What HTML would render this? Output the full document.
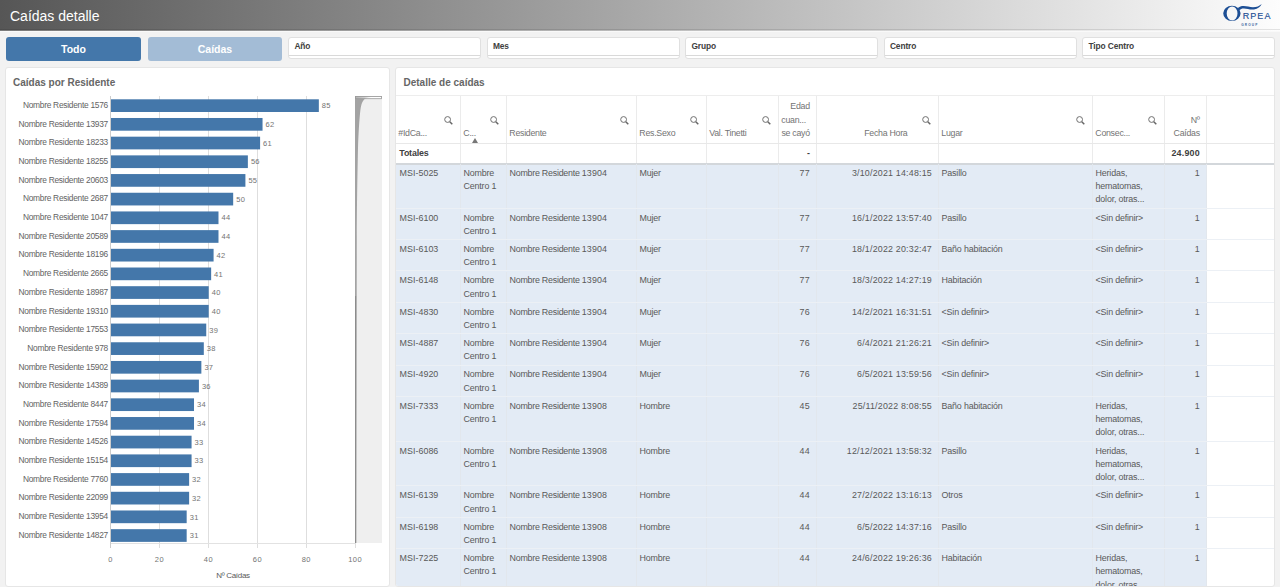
<!DOCTYPE html>
<html lang="es"><head><meta charset="utf-8"><title>Caídas detalle</title>
<style>
*{box-sizing:border-box;margin:0;padding:0}
html,body{width:1280px;height:587px;overflow:hidden;background:#f2f2f2;font-family:"Liberation Sans",sans-serif;color:#595959}
#hdr{position:absolute;left:0;top:0;width:1280px;height:31px;background:linear-gradient(90deg,#565656 0%,#fdfdfd 100%)}
#hdr:after{content:"";position:absolute;left:0;top:29px;width:1280px;height:3px;background:linear-gradient(180deg,rgba(0,0,0,.1) 0,rgba(0,0,0,.1) 1px,rgba(255,255,255,.22) 1px,rgba(255,255,255,.22) 2px,rgba(255,255,255,.55) 2px,rgba(255,255,255,.55) 3px)}
#hdr .t{position:absolute;left:10px;top:6.5px;font-size:14px;color:#fff;line-height:19px}
.btn{position:absolute;top:37px;height:24px;width:135px;border-radius:3px;color:#fff;font-weight:bold;font-size:10.5px;line-height:24px;text-align:center}
.flt{position:absolute;top:37px;height:22.4px;width:193.1px;background:#fff;border:1px solid #e0e0e0;border-radius:3px;font-size:8.4px;letter-spacing:-0.1px;font-weight:bold;color:#404040;line-height:17px;padding-left:5px}
.flt:after{content:"";position:absolute;left:0;right:0;top:17px;height:1px;background:#d9d9d9}
.panel{position:absolute;top:67px;height:520px;background:#fff;border:1px solid #e6e6e6;border-radius:3px;overflow:hidden}
#p1{left:5px;width:385px}
#p2{left:395px;width:880px}
.ptitle{position:absolute;left:7px;top:7.8px;font-size:10px;font-weight:bold;color:#666;line-height:14px}
.grid{position:absolute;top:28px;height:452px;width:1px;background:#dcdcdc}
.haxis{position:absolute;left:104px;top:475px;width:245px;height:1px;background:#dcdcdc}
.axis{position:absolute;left:104px;top:28px;height:452px;width:1px;background:#c4c4c4}
.bl{position:absolute;left:0;width:102px;text-align:right;font-size:8.4px;letter-spacing:-0.27px;line-height:11px;height:13px;color:#636363;white-space:nowrap}
.bar{position:absolute;left:104.6px;height:13px;background:#4477aa}
.bv{position:absolute;font-size:7.5px;line-height:13px;height:13px;color:#737373;letter-spacing:0.3px}
.tk{position:absolute;top:485.7px;width:40px;text-align:center;font-size:7.5px;line-height:12px;color:#737373;letter-spacing:0.45px}
.xl{position:absolute;top:501.5px;left:104px;width:246px;text-align:center;font-size:8px;letter-spacing:-0.3px;line-height:12px;color:#595959}
.rowsbg{position:absolute;left:0;top:97px;width:811px;height:430px;background:#e3ebf5}
.row{position:absolute;left:0;width:879px;border-bottom:1px solid #ecf0f5}
.c{position:absolute;top:0;bottom:0;font-size:8.9px;letter-spacing:-0.18px;line-height:13.33px;padding:2.9px 4px 0 2.6px;color:#595959;white-space:nowrap;overflow:hidden;border-right:1px solid #e2e7ed}
.r{text-align:right}
.c1{left:0;width:65px;padding-left:3.6px}.c2{left:65px;width:46px}.c3{left:111px;width:130px}.c4{left:241px;width:70px}.c5{left:311px;width:72px}
.c6{left:383px;width:38px;padding-right:6.2px}.c7{left:421px;width:122px;padding-right:6px}.c8{left:543px;width:154px}.c9{left:697px;width:72px}.c10{left:769px;width:42px;padding-right:6.2px}
.hline{position:absolute;left:0;width:880px;height:1px;background:#e8e8e8}
.hline2{position:absolute;left:0;width:880px;height:2px;background:#d3d7db}
.hd{position:absolute;top:28px;height:47px;border-right:1px solid #ebebeb;font-size:8.8px;letter-spacing:-0.27px;line-height:13.33px;color:#737373;padding:0 4px 2.8px 2.3px;display:flex;flex-direction:column;justify-content:flex-end;white-space:nowrap}
.hd.r{text-align:right}
.tot{position:absolute;top:76px;height:19px;border-right:1px solid #ebebeb;font-size:8.9px;letter-spacing:-0.18px;line-height:18.7px;color:#404040;padding:0 4px 0 3.3px;white-space:nowrap}
.s{position:absolute;right:6.05px;top:19.95px}
.tri{position:absolute;left:11.2px;top:42.1px;width:0;height:0;border-left:3.5px solid transparent;border-right:3.5px solid transparent;border-bottom:5.2px solid #777}
.m{letter-spacing:0.2px}
.c3{letter-spacing:-0.25px}
.c3 .m{letter-spacing:0.12px}
.c1.m{letter-spacing:0.03px}

</style></head><body>
<div id="hdr"><div class="t">Caídas detalle</div>
<svg style="position:absolute;left:1220px;top:0" width="56" height="30" viewBox="0 0 56 30"><path fill-rule="evenodd" fill="#1d4f95" d="M11.9 5.7a8.7 7.65 0 1 0 0 15.3a8.7 7.65 0 1 0 0-15.3zM12.1 6.4a5.4 7.05 0 1 1 0 14.1a5.4 7.05 0 1 1 0-14.1z"/><path d="M17.6 8.3C19.4 6.7 21.3 6.1 23.6 6.1C27 6.1 29.5 7.3 33 7.3C36.5 7.3 39.5 6 41.7 4C40.3 6.7 38 8.7 34 9.4C30.5 9.9 27 8.7 24 8.5C22 8.4 20.6 9 19.6 10.2z" fill="#1d4f95"/><text x="22.8" y="19.1" font-family="Liberation Sans,sans-serif" font-size="9" fill="#1d4f95" stroke="#1d4f95" stroke-width="0.15" textLength="27.6" lengthAdjust="spacing">RPEA</text><text x="21.2" y="25.7" font-family="Liberation Sans,sans-serif" font-size="3.2" font-weight="bold" fill="#3b66a0" textLength="16.2" lengthAdjust="spacing">GROUP</text></svg>
</div>
<div class="btn" style="left:6px;background:#4477aa">Todo</div>
<div class="btn" style="left:148px;width:134px;background:#a3bcd6">Caídas</div>
<div class="flt" style="left:288.4px">Año</div>
<div class="flt" style="left:486.9px">Mes</div>
<div class="flt" style="left:685.4px">Grupo</div>
<div class="flt" style="left:883.9px">Centro</div>
<div class="flt" style="left:1082.4px">Tipo Centro</div>

<div class="panel" id="p1"><div class="ptitle">Caídas por Residente</div>
<svg style="position:absolute;left:0;top:0" width="383" height="518" viewBox="0 0 383 518"><rect x="153" y="28" width="1" height="452" fill="#dedede"/><rect x="202" y="28" width="1" height="452" fill="#dedede"/><rect x="251" y="28" width="1" height="452" fill="#dedede"/><rect x="300" y="28" width="1" height="452" fill="#dedede"/><rect x="349" y="28" width="1" height="452" fill="#dedede"/><rect x="104" y="475" width="245" height="1" fill="#e2e2e2"/><rect x="104" y="28" width="1" height="452" fill="#cccccc"/><rect x="105" y="31.30" width="207.84" height="12.7" fill="#4477aa"/><rect x="105" y="49.99" width="151.54" height="12.7" fill="#4477aa"/><rect x="105" y="68.68" width="149.10" height="12.7" fill="#4477aa"/><rect x="105" y="87.37" width="136.86" height="12.7" fill="#4477aa"/><rect x="105" y="106.06" width="134.41" height="12.7" fill="#4477aa"/><rect x="105" y="124.75" width="122.17" height="12.7" fill="#4477aa"/><rect x="105" y="143.44" width="107.49" height="12.7" fill="#4477aa"/><rect x="105" y="162.13" width="107.49" height="12.7" fill="#4477aa"/><rect x="105" y="180.82" width="102.59" height="12.7" fill="#4477aa"/><rect x="105" y="199.51" width="100.15" height="12.7" fill="#4477aa"/><rect x="105" y="218.20" width="97.70" height="12.7" fill="#4477aa"/><rect x="105" y="236.89" width="97.70" height="12.7" fill="#4477aa"/><rect x="105" y="255.58" width="95.25" height="12.7" fill="#4477aa"/><rect x="105" y="274.27" width="92.81" height="12.7" fill="#4477aa"/><rect x="105" y="292.96" width="90.36" height="12.7" fill="#4477aa"/><rect x="105" y="311.65" width="87.91" height="12.7" fill="#4477aa"/><rect x="105" y="330.34" width="83.01" height="12.7" fill="#4477aa"/><rect x="105" y="349.03" width="83.01" height="12.7" fill="#4477aa"/><rect x="105" y="367.72" width="80.57" height="12.7" fill="#4477aa"/><rect x="105" y="386.41" width="80.57" height="12.7" fill="#4477aa"/><rect x="105" y="405.10" width="78.12" height="12.7" fill="#4477aa"/><rect x="105" y="423.79" width="78.12" height="12.7" fill="#4477aa"/><rect x="105" y="442.48" width="75.67" height="12.7" fill="#4477aa"/><rect x="105" y="461.17" width="75.67" height="12.7" fill="#4477aa"/></svg>
<div class="bl" style="top:31.9px">Nombre Residente 1576</div><div class="bv" style="top:31.3px;left:315.8px">85</div>
<div class="bl" style="top:50.6px">Nombre Residente 13937</div><div class="bv" style="top:50.0px;left:259.5px">62</div>
<div class="bl" style="top:69.3px">Nombre Residente 18233</div><div class="bv" style="top:68.7px;left:257.1px">61</div>
<div class="bl" style="top:88.0px">Nombre Residente 18255</div><div class="bv" style="top:87.4px;left:244.9px">56</div>
<div class="bl" style="top:106.7px">Nombre Residente 20603</div><div class="bv" style="top:106.1px;left:242.4px">55</div>
<div class="bl" style="top:125.3px">Nombre Residente 2687</div><div class="bv" style="top:124.8px;left:230.2px">50</div>
<div class="bl" style="top:144.0px">Nombre Residente 1047</div><div class="bv" style="top:143.4px;left:215.5px">44</div>
<div class="bl" style="top:162.7px">Nombre Residente 20589</div><div class="bv" style="top:162.1px;left:215.5px">44</div>
<div class="bl" style="top:181.4px">Nombre Residente 18196</div><div class="bv" style="top:180.8px;left:210.6px">42</div>
<div class="bl" style="top:200.1px">Nombre Residente 2665</div><div class="bv" style="top:199.5px;left:208.1px">41</div>
<div class="bl" style="top:218.8px">Nombre Residente 18987</div><div class="bv" style="top:218.2px;left:205.7px">40</div>
<div class="bl" style="top:237.5px">Nombre Residente 19310</div><div class="bv" style="top:236.9px;left:205.7px">40</div>
<div class="bl" style="top:256.2px">Nombre Residente 17553</div><div class="bv" style="top:255.6px;left:203.3px">39</div>
<div class="bl" style="top:274.9px">Nombre Residente 978</div><div class="bv" style="top:274.3px;left:200.8px">38</div>
<div class="bl" style="top:293.6px">Nombre Residente 15902</div><div class="bv" style="top:293.0px;left:198.4px">37</div>
<div class="bl" style="top:312.3px">Nombre Residente 14389</div><div class="bv" style="top:311.7px;left:195.9px">36</div>
<div class="bl" style="top:330.9px">Nombre Residente 8447</div><div class="bv" style="top:330.3px;left:191.0px">34</div>
<div class="bl" style="top:349.6px">Nombre Residente 17594</div><div class="bv" style="top:349.0px;left:191.0px">34</div>
<div class="bl" style="top:368.3px">Nombre Residente 14526</div><div class="bv" style="top:367.7px;left:188.6px">33</div>
<div class="bl" style="top:387.0px">Nombre Residente 15154</div><div class="bv" style="top:386.4px;left:188.6px">33</div>
<div class="bl" style="top:405.7px">Nombre Residente 7760</div><div class="bv" style="top:405.1px;left:186.1px">32</div>
<div class="bl" style="top:424.4px">Nombre Residente 22099</div><div class="bv" style="top:423.8px;left:186.1px">32</div>
<div class="bl" style="top:443.1px">Nombre Residente 13954</div><div class="bv" style="top:442.5px;left:183.7px">31</div>
<div class="bl" style="top:461.8px">Nombre Residente 14827</div><div class="bv" style="top:461.2px;left:183.7px">31</div>
<div class="tk" style="left:84.5px">0</div>
<div class="tk" style="left:133.4px">20</div>
<div class="tk" style="left:182.4px">40</div>
<div class="tk" style="left:231.4px">60</div>
<div class="tk" style="left:280.3px">80</div>
<div class="tk" style="left:329.2px">100</div>
<div class="xl">Nº Caídas</div>
<svg style="position:absolute;left:349px;top:28px" width="27" height="447.3" viewBox="0 0 27 447.3"><defs><linearGradient id="hg" x1="0" x2="1" y1="0" y2="0"><stop offset="0" stop-color="#fff" stop-opacity="0.15"/><stop offset="0.35" stop-color="#fff" stop-opacity="0.5"/><stop offset="0.6" stop-color="#fff" stop-opacity="1"/></linearGradient></defs><rect x="0" y="0" width="27" height="448" fill="#efefef"/><path d="M0 0 L27 0 L27 1.2 L13 1.8 C8.5 2.6,6.5 6,5.4 14 C4.3 24,3.6 36,3 52 C2.5 75,2 100,1.8 140 L1.3 448 L0 448Z" fill="#a3a3a3"/><rect x="0" y="200" width="1.1" height="248" fill="#8c8c8c"/><rect x="0.4" y="0.4" width="26.2" height="2.3" fill="url(#hg)" stroke="#999" stroke-width="0.8"/></svg>

</div>
<div class="panel" id="p2"><div class="ptitle" style="left:7.5px">Detalle de caídas</div>
<div class="hline" style="top:27px;background:#ededed"></div>
<div class="hline" style="top:75px"></div>
<div class="hline2" style="top:95px"></div>
<div class="hd" style="left:0;width:65px">#IdCa...<svg class="s" width="10" height="10" viewBox="0 0 10 10"><circle cx="3.6" cy="3.5" r="2.9" fill="none" stroke="#6e6e6e" stroke-width="1"/><path d="M5.8 5.7L8.3 8.2" stroke="#666" stroke-width="1.5"/></svg></div>
<div class="hd" style="left:65px;width:46px">C...<svg class="s" width="10" height="10" viewBox="0 0 10 10"><circle cx="3.6" cy="3.5" r="2.9" fill="none" stroke="#6e6e6e" stroke-width="1"/><path d="M5.8 5.7L8.3 8.2" stroke="#666" stroke-width="1.5"/></svg><i class="tri"></i></div>
<div class="hd" style="left:111px;width:130px">Residente<svg class="s" width="10" height="10" viewBox="0 0 10 10"><circle cx="3.6" cy="3.5" r="2.9" fill="none" stroke="#6e6e6e" stroke-width="1"/><path d="M5.8 5.7L8.3 8.2" stroke="#666" stroke-width="1.5"/></svg></div>
<div class="hd" style="left:241px;width:70px">Res.Sexo<svg class="s" width="10" height="10" viewBox="0 0 10 10"><circle cx="3.6" cy="3.5" r="2.9" fill="none" stroke="#6e6e6e" stroke-width="1"/><path d="M5.8 5.7L8.3 8.2" stroke="#666" stroke-width="1.5"/></svg></div>
<div class="hd" style="left:311px;width:72px">Val. Tinetti<svg class="s" width="10" height="10" viewBox="0 0 10 10"><circle cx="3.6" cy="3.5" r="2.9" fill="none" stroke="#6e6e6e" stroke-width="1"/><path d="M5.8 5.7L8.3 8.2" stroke="#666" stroke-width="1.5"/></svg></div>
<div class="hd r" style="left:383px;width:38px;padding-right:6.2px">Edad<span style="display:block;text-align:left">cuan...</span>se cayó</div>
<div class="hd r" style="left:421px;width:122px;padding-right:30.5px">Fecha Hora<svg class="s" width="10" height="10" viewBox="0 0 10 10"><circle cx="3.6" cy="3.5" r="2.9" fill="none" stroke="#6e6e6e" stroke-width="1"/><path d="M5.8 5.7L8.3 8.2" stroke="#666" stroke-width="1.5"/></svg></div>
<div class="hd" style="left:543px;width:154px">Lugar<svg class="s" width="10" height="10" viewBox="0 0 10 10"><circle cx="3.6" cy="3.5" r="2.9" fill="none" stroke="#6e6e6e" stroke-width="1"/><path d="M5.8 5.7L8.3 8.2" stroke="#666" stroke-width="1.5"/></svg></div>
<div class="hd" style="left:697px;width:72px">Consec...<svg class="s" width="10" height="10" viewBox="0 0 10 10"><circle cx="3.6" cy="3.5" r="2.9" fill="none" stroke="#6e6e6e" stroke-width="1"/><path d="M5.8 5.7L8.3 8.2" stroke="#666" stroke-width="1.5"/></svg></div>
<div class="hd r" style="left:769px;width:42px;padding-right:6.2px">Nº<br>Caídas</div>
<div class="tot" style="left:0;width:65px"><b>Totales</b></div>
<div class="tot" style="left:65px;width:46px"></div>
<div class="tot" style="left:111px;width:130px"></div>
<div class="tot" style="left:241px;width:70px"></div>
<div class="tot" style="left:311px;width:72px"></div>
<div class="tot r" style="left:383px;width:38px;padding-right:6.2px"><b>-</b></div>
<div class="tot" style="left:421px;width:122px"></div>
<div class="tot" style="left:543px;width:154px"></div>
<div class="tot" style="left:697px;width:72px"></div>
<div class="tot r" style="left:769px;width:42px;padding-right:6.2px"><b class="m">24.900</b></div>

<div class="rowsbg"></div>
<div class="row" style="top:95.9px;height:45.0px"><div class="c c1 m">MSI-5025</div><div class="c c2">Nombre<br>Centro 1</div><div class="c c3">Nombre Residente <span class="m">13904</span></div><div class="c c4">Mujer</div><div class="c c5"></div><div class="c c6 m r">77</div><div class="c c7 m r">3/10/2021 14:48:15</div><div class="c c8">Pasillo</div><div class="c c9">Heridas,<br>hematomas,<br>dolor, otras...</div><div class="c c10 m r">1</div></div>
<div class="row" style="top:140.9px;height:31.3px"><div class="c c1 m">MSI-6100</div><div class="c c2">Nombre<br>Centro 1</div><div class="c c3">Nombre Residente <span class="m">13904</span></div><div class="c c4">Mujer</div><div class="c c5"></div><div class="c c6 m r">77</div><div class="c c7 m r">16/1/2022 13:57:40</div><div class="c c8">Pasillo</div><div class="c c9">&lt;Sin definir&gt;</div><div class="c c10 m r">1</div></div>
<div class="row" style="top:172.2px;height:31.3px"><div class="c c1 m">MSI-6103</div><div class="c c2">Nombre<br>Centro 1</div><div class="c c3">Nombre Residente <span class="m">13904</span></div><div class="c c4">Mujer</div><div class="c c5"></div><div class="c c6 m r">77</div><div class="c c7 m r">18/1/2022 20:32:47</div><div class="c c8">Baño habitación</div><div class="c c9">&lt;Sin definir&gt;</div><div class="c c10 m r">1</div></div>
<div class="row" style="top:203.5px;height:31.3px"><div class="c c1 m">MSI-6148</div><div class="c c2">Nombre<br>Centro 1</div><div class="c c3">Nombre Residente <span class="m">13904</span></div><div class="c c4">Mujer</div><div class="c c5"></div><div class="c c6 m r">77</div><div class="c c7 m r">18/3/2022 14:27:19</div><div class="c c8">Habitación</div><div class="c c9">&lt;Sin definir&gt;</div><div class="c c10 m r">1</div></div>
<div class="row" style="top:234.8px;height:31.3px"><div class="c c1 m">MSI-4830</div><div class="c c2">Nombre<br>Centro 1</div><div class="c c3">Nombre Residente <span class="m">13904</span></div><div class="c c4">Mujer</div><div class="c c5"></div><div class="c c6 m r">76</div><div class="c c7 m r">14/2/2021 16:31:51</div><div class="c c8">&lt;Sin definir&gt;</div><div class="c c9">&lt;Sin definir&gt;</div><div class="c c10 m r">1</div></div>
<div class="row" style="top:266.1px;height:31.5px"><div class="c c1 m">MSI-4887</div><div class="c c2">Nombre<br>Centro 1</div><div class="c c3">Nombre Residente <span class="m">13904</span></div><div class="c c4">Mujer</div><div class="c c5"></div><div class="c c6 m r">76</div><div class="c c7 m r">6/4/2021 21:26:21</div><div class="c c8">&lt;Sin definir&gt;</div><div class="c c9">&lt;Sin definir&gt;</div><div class="c c10 m r">1</div></div>
<div class="row" style="top:297.6px;height:31.3px"><div class="c c1 m">MSI-4920</div><div class="c c2">Nombre<br>Centro 1</div><div class="c c3">Nombre Residente <span class="m">13904</span></div><div class="c c4">Mujer</div><div class="c c5"></div><div class="c c6 m r">76</div><div class="c c7 m r">6/5/2021 13:59:56</div><div class="c c8">&lt;Sin definir&gt;</div><div class="c c9">&lt;Sin definir&gt;</div><div class="c c10 m r">1</div></div>
<div class="row" style="top:328.9px;height:44.8px"><div class="c c1 m">MSI-7333</div><div class="c c2">Nombre<br>Centro 1</div><div class="c c3">Nombre Residente <span class="m">13908</span></div><div class="c c4">Hombre</div><div class="c c5"></div><div class="c c6 m r">45</div><div class="c c7 m r">25/11/2022 8:08:55</div><div class="c c8">Baño habitación</div><div class="c c9">Heridas,<br>hematomas,<br>dolor, otras...</div><div class="c c10 m r">1</div></div>
<div class="row" style="top:373.7px;height:44.7px"><div class="c c1 m">MSI-6086</div><div class="c c2">Nombre<br>Centro 1</div><div class="c c3">Nombre Residente <span class="m">13908</span></div><div class="c c4">Hombre</div><div class="c c5"></div><div class="c c6 m r">44</div><div class="c c7 m r">12/12/2021 13:58:32</div><div class="c c8">Pasillo</div><div class="c c9">Heridas,<br>hematomas,<br>dolor, otras...</div><div class="c c10 m r">1</div></div>
<div class="row" style="top:418.4px;height:31.3px"><div class="c c1 m">MSI-6139</div><div class="c c2">Nombre<br>Centro 1</div><div class="c c3">Nombre Residente <span class="m">13908</span></div><div class="c c4">Hombre</div><div class="c c5"></div><div class="c c6 m r">44</div><div class="c c7 m r">27/2/2022 13:16:13</div><div class="c c8">Otros</div><div class="c c9">&lt;Sin definir&gt;</div><div class="c c10 m r">1</div></div>
<div class="row" style="top:449.7px;height:31.5px"><div class="c c1 m">MSI-6198</div><div class="c c2">Nombre<br>Centro 1</div><div class="c c3">Nombre Residente <span class="m">13908</span></div><div class="c c4">Hombre</div><div class="c c5"></div><div class="c c6 m r">44</div><div class="c c7 m r">6/5/2022 14:37:16</div><div class="c c8">Pasillo</div><div class="c c9">&lt;Sin definir&gt;</div><div class="c c10 m r">1</div></div>
<div class="row" style="top:481.2px;height:43.8px"><div class="c c1 m">MSI-7225</div><div class="c c2">Nombre<br>Centro 1</div><div class="c c3">Nombre Residente <span class="m">13908</span></div><div class="c c4">Hombre</div><div class="c c5"></div><div class="c c6 m r">44</div><div class="c c7 m r">24/6/2022 19:26:36</div><div class="c c8">Habitación</div><div class="c c9">Heridas,<br>hematomas,<br>dolor, otras...</div><div class="c c10 m r">1</div></div>
</div>
</body></html>
